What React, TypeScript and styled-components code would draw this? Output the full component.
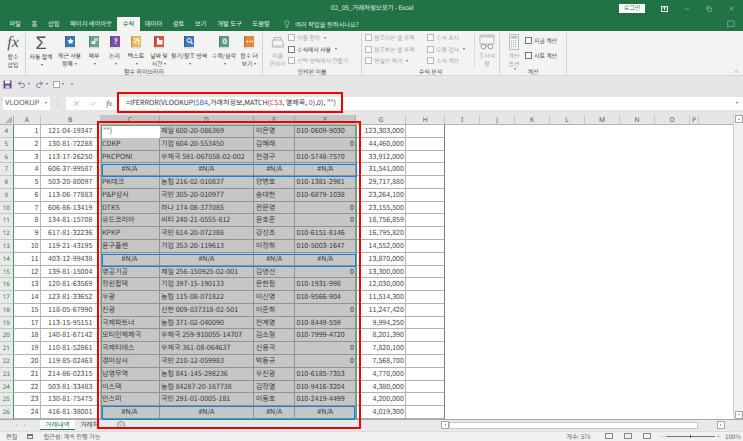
import { styled, createGlobalStyle } from 'styled-components';
import { ReactNode } from 'react';
import {
	Check,
	ChevronUp,
	Copy,
	Lightbulb,
	MessageSquare,
	Minus,
	Plus,
	Redo2,
	Undo2,
	X,
} from 'lucide-react';

const GlobalStyle = createGlobalStyle`
	html, body {
		margin: 0;
		padding: 0;
		background: #fff;
	}
	body {
		font-family: 'Noto Sans CJK KR', 'Noto Sans', sans-serif;
		text-rendering: geometricPrecision;
	}
`;

const Window = styled.div`
	position: relative;
	width: 743px;
	height: 441px;
	overflow: hidden;
	display: flex;
	flex-direction: column;
	background: #fff;
	color: #444;
`;

/* title bar + tabs */
const TitleBar = styled.div`
	height: 17px;
	background: #217346;
	display: flex;
	align-items: center;
	justify-content: flex-end;
	color: #e4efe8;
	font-size: 6.4px;
	position: relative;
`;

const TitleText = styled.div`
	position: absolute;
	left: 331px;
	top: 3px;
	line-height: 10px;
`;

const LoginButton = styled.div`
	width: 26px;
	height: 8.5px;
	background: #fff;
	color: #217346;
	font-size: 6px;
	line-height: 8.5px;
	text-align: center;
	margin-right: 8px;
`;

const WindowButton = styled.div`
	width: 22.5px;
	display: flex;
	justify-content: center;
	color: #e4efe8;
`;

const TabBar = styled.div`
	height: 14px;
	background: #217346;
	display: flex;
	align-items: stretch;
	padding-left: 4px;
	position: relative;
`;

const Tab = styled.div<{ $active?: boolean }>`
	padding: 0 5.3px;
	font-size: 6.3px;
	line-height: 14px;
	background: ${(p) => (p.$active ? '#f3f3f3' : 'transparent')};
	color: ${(p) => (p.$active ? '#217346' : '#e4efe8')};
	font-weight: ${(p) => (p.$active ? 500 : 400)};
`;

const TellMe = styled.div`
	display: flex;
	align-items: center;
	gap: 4px;
	margin-left: 8px;
	font-size: 6.3px;
	color: #dfeae3;
`;

const CommentButton = styled.div`
	position: absolute;
	right: 8px;
	top: 3px;
	color: #e4efe8;
	display: flex;
`;

/* ribbon */
const Ribbon = styled.div`
	height: 45px;
	background: #f3f3f3;
	border-bottom: 1px solid #d6d6d6;
	box-sizing: border-box;
	display: flex;
	position: relative;
`;

const Group = styled.div<{ $w: number }>`
	width: ${(p) => p.$w}px;
	flex: none;
	display: flex;
	flex-direction: column;
	border-right: 1px solid #d4d4d4;
	box-sizing: border-box;
	margin-top: 2px;
`;

const GroupBody = styled.div<{ $pad?: number }>`
	flex: 1;
	display: flex;
	padding-left: ${(p) => p.$pad ?? 0}px;
	min-height: 0;
`;

const GroupLabel = styled.div`
	height: 7px;
	line-height: 7px;
	font-size: 6px;
	text-align: center;
	color: #555;
`;

const Item = styled.div<{ $w: number; $off?: boolean }>`
	width: ${(p) => p.$w}px;
	flex: none;
	display: flex;
	flex-direction: column;
	align-items: center;
	font-size: 5.9px;
	line-height: 8px;
	text-align: center;
	white-space: nowrap;
	color: ${(p) => (p.$off ? '#a9a9a9' : '#444')};
`;

const WatchItem = styled(Item)`
	border-left: 1px solid #dcdcdc;
	box-sizing: border-box;
`;

const ItemIcon = styled.div`
	height: 17px;
	margin-top: 1px;
	display: flex;
	align-items: center;
	justify-content: center;
	margin-bottom: 2px;
`;

const Caret = styled.span`
	display: inline-block;
	width: 0;
	height: 0;
	border-left: 1.5px solid transparent;
	border-right: 1.5px solid transparent;
	border-top: 2px solid #666;
	vertical-align: middle;
	margin-left: 2px;
`;

const CommandList = styled.div<{ $w: number; $gap?: number; $top?: number }>`
	width: ${(p) => p.$w}px;
	flex: none;
	display: flex;
	flex-direction: column;
	gap: ${(p) => p.$gap ?? 2}px;
	padding-top: ${(p) => p.$top ?? 0}px;
`;

const Command = styled.div<{ $off?: boolean }>`
	height: 9.5px;
	display: flex;
	align-items: center;
	gap: 2px;
	font-size: 5.9px;
	white-space: nowrap;
	color: ${(p) => (p.$off ? '#a9a9a9' : '#444')};
`;

const TinyBox = styled.span<{ $c?: string }>`
	width: 7px;
	height: 7px;
	flex: none;
	box-sizing: border-box;
	border: 1px solid ${(p) => p.$c ?? '#b8b8b8'};
	background: #fafafa;
`;

const FxGlyph = styled.div`
	font-family: 'Liberation Serif', serif;
	font-style: italic;
	font-size: 16px;
	line-height: 18px;
	color: #555;
`;

const SigmaGlyph = styled.div`
	font-family: 'Liberation Sans', sans-serif;
	font-size: 18px;
	line-height: 18px;
	color: #555;
`;

const CollapseButton = styled.div`
	position: absolute;
	right: 3px;
	bottom: 0;
	color: #666;
	display: flex;
`;

/* quick access + formula bar */
const QuickBar = styled.div`
	height: 21px;
	background: #e6e6e6;
	display: flex;
	align-items: center;
	gap: 5px;
	padding: 0 0 5px 3px;
	box-sizing: border-box;
`;

const QuickIcon = styled.div<{ $c: string }>`
	color: ${(p) => p.$c};
	display: flex;
	align-items: center;
`;

const SaveIcon = () => (
	<svg width='9' height='9' viewBox='0 0 9 9'>
		<rect x='0.5' y='0.5' width='8' height='8' fill='#6a4a97' />
		<rect x='2' y='0.5' width='5' height='3' fill='#fff' />
		<rect x='2.5' y='5.5' width='4' height='3' fill='#d9d2e6' />
	</svg>
);

const FormulaBar = styled.div`
	height: 12.5px;
	background: #e6e6e6;
	display: flex;
	align-items: stretch;
`;

const NameBox = styled.div`
	width: 47px;
	margin-left: 3px;
	background: #fff;
	font-family: 'Noto Sans', sans-serif;
	font-size: 7.4px;
	line-height: 12.5px;
	padding-left: 2px;
	box-sizing: border-box;
	color: #555;
	position: relative;
`;

const NameCaret = styled(Caret)`
	position: absolute;
	right: 3px;
	top: 5px;
`;

const BarDots = styled.div`
	width: 16px;
	text-align: center;
	font-size: 7px;
	line-height: 12px;
	color: #999;
`;

const BarButtons = styled.div`
	width: 52px;
	background: #fff;
	display: flex;
	align-items: center;
	justify-content: space-around;
	padding: 0 1px 0 2px;
	box-sizing: border-box;
	color: #666;
`;

const BarFx = styled.span`
	font-family: 'Liberation Serif', serif;
	font-style: italic;
	font-size: 8px;
	color: #555;
`;

const FormulaInput = styled.div`
	flex: 1;
	margin-left: 1px;
	padding-left: 7px;
	background: #fff;
	font-size: 7.05px;
	line-height: 12.5px;
	white-space: pre;
	color: #333;
	position: relative;
`;

const FormulaRef = styled.span<{ $c: string }>`
	color: ${(p) => p.$c};
`;

const FormulaCaret = styled(Caret)`
	position: absolute;
	right: 5px;
	top: 5px;
`;

const BarGap = styled.div`
	height: 5.5px;
	background: #e6e6e6;
`;

/* sheet */
const SheetArea = styled.div`
	display: flex;
	height: 304px;
`;

const Sheet = styled.div`
	flex: 1;
	min-width: 0;
	position: relative;
	overflow: hidden;
`;

const COLUMNS = '13.5px 27.5px 59.5px 59px 94.7px 40.8px 61.5px 50px 38.6px 35px 35px 35px 35px 35px 35px 35px 9px';

const HeaderRow = styled.div`
	display: grid;
	grid-template-columns: ${COLUMNS};
	height: 10px;
	background: #e6e6e6;
	border-bottom: 1px solid #b4b4b4;
	box-sizing: border-box;
`;

const CornerCell = styled.div`
	position: relative;
	border-right: 1px solid #b4b4b4;
	&::after {
		content: '';
		position: absolute;
		right: 1px;
		bottom: 1px;
		border-left: 7px solid transparent;
		border-bottom: 7px solid #b5b5b5;
	}
`;

const ColHead = styled.div<{ $selected?: boolean }>`
	font-family: 'Noto Sans', sans-serif;
	font-size: 6.6px;
	line-height: 9px;
	text-align: center;
	color: ${(p) => (p.$selected ? '#3f6a52' : '#555')};
	background: ${(p) => (p.$selected ? '#c6c6c6' : 'transparent')};
	border-right: 1px solid ${(p) => (p.$selected ? '#aaa' : '#c8c8c8')};
	box-sizing: border-box;
`;

const Row = styled.div<{ $h: number }>`
	display: grid;
	grid-template-columns: ${COLUMNS};
	grid-template-rows: ${(p) => p.$h}px;
	height: ${(p) => p.$h}px;
`;

const RowHead = styled.div`
	background: #e9e9e9;
	color: #2f7a50;
	font-family: 'Noto Sans', sans-serif;
	font-size: 6.2px;
	line-height: 12px;
	text-align: center;
	border-right: 1px solid #3f9a68;
	border-bottom: 1px solid #c8c8c8;
	box-sizing: border-box;
`;

const Cell = styled.div<{ $align?: string; $selected?: boolean; $edge?: boolean }>`
	font-size: 7.1px;
	line-height: 12px;
	padding: 0 1.5px;
	box-sizing: border-box;
	white-space: nowrap;
	overflow: hidden;
	text-align: ${(p) => p.$align ?? 'left'};
	color: ${(p) => (p.$selected ? '#3a3a3a' : '#4c4c4c')};
	background: ${(p) => (p.$selected ? '#c6c6c6' : '#fff')};
	border-right: 1px solid ${(p) => (p.$edge ? '#7d7d7d' : p.$selected ? '#929292' : '#b8b8b8')};
	border-bottom: 1px solid ${(p) => (p.$selected ? '#929292' : '#b0b0b0')};
`;

const ActiveCell = styled(Cell)`
	background: #fff;
	border-right-color: #fff;
	border-bottom-color: #fff;
	padding-left: 2.5px;
`;

const SelectionFrame = styled.div`
	position: absolute;
	left: 100.5px;
	top: 10px;
	width: 256.5px;
	height: 294px;
	box-sizing: border-box;
	border: 1px solid #5f9f7c;
	pointer-events: none;
`;

const VScroll = styled.div`
	width: 10px;
	flex: none;
	background: #f0f0f0;
	border-left: 1px solid #d0d0d0;
	box-sizing: border-box;
	display: flex;
	flex-direction: column;
	justify-content: space-between;
	align-items: center;
`;

const ScrollButton = styled.div`
	width: 8px;
	height: 8px;
	background: #fff;
	border: 1px solid #a8a8a8;
	box-sizing: border-box;
	display: flex;
	align-items: center;
	justify-content: center;
	flex: none;
`;

const Arrow = styled.span<{ $dir: 'up' | 'down' | 'left' | 'right' }>`
	width: 0;
	height: 0;
	border-style: solid;
	border-color: transparent;
	border-width: 1.6px;
	${(p) => `border-${{ up: 'bottom', down: 'top', left: 'right', right: 'left' }[p.$dir]}-color: #444;`}
`;

/* sheet tabs */
const SheetTabs = styled.div`
	height: 11.5px;
	background: #e9e9e9;
	border-top: 1px solid #a8a8a8;
	box-sizing: border-box;
	display: flex;
	align-items: stretch;
`;

const TabNav = styled.div`
	width: 40px;
	display: flex;
	justify-content: center;
	align-items: center;
	gap: 7px;
	opacity: 0.45;
`;

const SheetTab = styled.div<{ $active?: boolean; $w: number }>`
	width: ${(p) => p.$w}px;
	height: 10px;
	text-align: center;
	font-size: 6.6px;
	line-height: 9px;
	overflow: hidden;
	box-sizing: border-box;
	background: ${(p) => (p.$active ? '#fff' : 'transparent')};
	color: ${(p) => (p.$active ? '#217346' : '#444')};
	border-bottom: ${(p) => (p.$active ? '1px solid #217346' : 'none')};
`;

const AddSheet = styled.div`
	width: 8px;
	height: 8px;
	margin: 1px 0 0 13px;
	border: 1px solid #888;
	border-radius: 50%;
	box-sizing: border-box;
	color: #777;
	display: flex;
	align-items: center;
	justify-content: center;
`;

const HScroll = styled.div`
	margin-left: auto;
	width: 292px;
	display: flex;
	align-items: center;
	margin-right: 10px;
`;

const HThumb = styled.div`
	width: 249px;
	height: 7px;
	background: #fff;
	border: 1px solid #c8c8c8;
	box-sizing: border-box;
	margin-right: 19px;
`;

/* status bar */
const StatusBar = styled.div`
	flex: 1;
	background: #f0f0f0;
	border-top: 1px solid #dcdcdc;
	box-sizing: border-box;
	display: flex;
	align-items: center;
	padding-left: 6px;
	font-size: 6.2px;
	color: #666;
`;

const StatusIcon = styled.div`
	width: 6px;
	height: 5px;
	border: 1px solid #777;
	border-top-width: 2px;
	box-sizing: border-box;
	margin: 0 10px 0 10px;
`;

const StatusGroup = styled.div`
	margin-left: auto;
	display: flex;
	align-items: center;
	gap: 11px;
	padding-right: 2px;
`;

const CountText = styled.span`
	margin-right: 3px;
`;

const ViewIcon = styled.div`
	width: 8px;
	height: 6px;
	border: 1px solid #888;
	box-sizing: border-box;
`;

const ZoomSlider = styled.div`
	display: flex;
	align-items: center;
	gap: 1px;
	color: #999;
	margin: 0 -7px 0 -2px;
`;

const ZoomTrack = styled.div`
	width: 49px;
	height: 1px;
	background: #777;
	position: relative;
	&::after {
		content: '';
		position: absolute;
		left: 24px;
		top: -1px;
		width: 1px;
		height: 3px;
		background: #555;
	}
`;

/* review marks drawn on top of the screenshot */
const Mark = styled.div<{ $c: string; $x: number; $y: number; $w: number; $h: number }>`
	position: absolute;
	left: ${(p) => p.$x}px;
	top: ${(p) => p.$y}px;
	width: ${(p) => p.$w}px;
	height: ${(p) => p.$h}px;
	border: ${(p) => (p.$c === 'red' ? '2px solid #f00000' : '1.6px solid #0a84e8')};
	box-sizing: border-box;
	pointer-events: none;
`;

const Book = ({ color, children }: { color: string; children: ReactNode }) => (
	<svg width='12' height='14' viewBox='0 0 12 14'>
		<path d='M1 1h10v11H2.5A1.5 1.5 0 0 0 1 13.5z' fill={color} />
		<path d='M1 12.5A1.5 1.5 0 0 1 2.5 12H11v1.5H2.5A1.5 1.5 0 0 1 1 12.5z' fill='#ddd' />
		<rect x='1' y='1' width='1.2' height='11' fill='#00000030' />
		{children}
	</svg>
);

const Glyph = ({ children }: { children: string }) => (
	<text
		x='6.6'
		y='9'
		fontSize='7.5'
		fontWeight='bold'
		textAnchor='middle'
		fill='#fff'
		fontFamily="'Noto Sans CJK KR', sans-serif"
	>
		{children}
	</text>
);

const recentIcon = (
	<Book color='#3f79b5'>
		<path d='M6.6 3l1 2.1 2.2.3-1.6 1.5.4 2.2-2-1-2 1 .4-2.2-1.6-1.5 2.2-.3z' fill='#fff' />
	</Book>
);
const financeIcon = (
	<Book color='#6aa38a'>
		<rect x='3.5' y='6' width='4' height='3' fill='#dcebe4' />
		<rect x='6' y='3' width='4' height='3' fill='#b9d6c9' />
	</Book>
);
const logicIcon = (
	<Book color='#7b4fa6'>
		<Glyph>?</Glyph>
	</Book>
);
const textIcon = (
	<Book color='#e5b95a'>
		<Glyph>가</Glyph>
	</Book>
);
const dateIcon = (
	<Book color='#d9573f'>
		<rect x='4' y='5' width='5.5' height='4.5' fill='#fff' />
		<rect x='4' y='3' width='2' height='2' fill='#fff' />
	</Book>
);
const lookupIcon = (
	<Book color='#3f79b5'>
		<circle cx='6.2' cy='5.4' r='2' fill='none' stroke='#fff' strokeWidth='1' />
		<path d='M7.6 7l2 2' stroke='#fff' strokeWidth='1.2' />
	</Book>
);
const mathIcon = (
	<Book color='#5f9c87'>
		<Glyph>0</Glyph>
	</Book>
);
const moreIcon = (
	<Book color='#e58a3c'>
		<path d='M3.5 6.5h1.4M6 6.5h1.4M8.5 6.5h1.4' stroke='#fff' strokeWidth='1.3' />
	</Book>
);

const nameManagerIcon = (
	<svg width='16' height='14' viewBox='0 0 16 14'>
		<path d='M3 5h9l2 6H2z' fill='#f4f4f4' stroke='#b5b5b5' />
		<path d='M4 5V2.5h7V5' fill='none' stroke='#b5b5b5' />
		<rect x='2' y='11' width='12' height='2' fill='#cfcfcf' />
	</svg>
);

const watchIcon = (
	<svg width='16' height='16' viewBox='0 0 16 16'>
		<rect x='1' y='1' width='14' height='9' fill='#f6f6f6' stroke='#bdbdbd' />
		<rect x='1' y='1' width='14' height='2.5' fill='#c9c9c9' />
		<circle cx='4.5' cy='12.5' r='2.4' fill='none' stroke='#999' />
		<circle cx='11.5' cy='12.5' r='2.4' fill='none' stroke='#999' />
		<path d='M7 12h2' stroke='#999' />
	</svg>
);

const calcIcon = (
	<svg width='10' height='16' viewBox='0 0 10 16'>
		<rect x='0.5' y='0.5' width='9' height='15' fill='#f4f4f4' stroke='#bdbdbd' />
		<rect x='2' y='2' width='6' height='2.5' fill='#bdbdbd' />
		<path d='M2 6.5h6M2 8.5h6M2 10.5h6M2 12.5h6' stroke='#b0b0b0' strokeDasharray='1 1' />
	</svg>
);

type Data = [number, number, string, string?, string?, string?, string?, string?];

const ROWS: Data[] = [
	[4, 1, '121-04-19347', '"")', '제일 600-20-086369', '이은영', '010-0609-9030', '123,303,000'],
	[5, 2, '130-81-72288', 'CDKP', '기업 604-20-553450', '김혜래', '0', '44,460,000'],
	[6, 3, '113-17-26250', 'PKCPONI', '우체국 591-067058-02-002', '전경구', '010-5748-7570', '33,912,000'],
	[7, 4, '606-37-99587', '#N/A', '#N/A', '#N/A', '#N/A', '31,541,000'],
	[8, 5, '503-20-80097', 'PK테크', '농협 216-02-010837', '양병호', '010-1381-2981', '29,717,880'],
	[9, 6, '113-06-77883', 'P&P상사', '국민 305-20-010977', '송대헌', '010-6879-1038', '23,264,100'],
	[10, 7, '606-86-13419', 'DTKS', '하나 174-08-377085', '권문영', '0', '23,155,500'],
	[11, 8, '134-81-15708', '유드코리아', '씨티 240-21-0555-812', '윤호준', '0', '18,756,859'],
	[12, 9, '617-81-32236', 'KPKP', '국민 614-20-072386', '강성조', '010-6151-8146', '16,795,820'],
	[13, 10, '119-21-43195', '윤구플랜', '기업 353-20-119613', '이정희', '010-5003-1647', '14,552,000'],
	[14, 11, '403-12-99438', '#N/A', '#N/A', '#N/A', '#N/A', '13,870,000'],
	[15, 12, '139-81-15004', '영공기공', '제일 256-150925-02-001', '김명선', '0', '13,300,000'],
	[16, 13, '120-81-63569', '정원윌텍', '기업 397-15-190133', '문한필', '010-1931-998', '12,030,000'],
	[17, 14, '123-81-33652', '우광', '농협 115-08-071822', '이신영', '010-9566-904', '11,514,300'],
	[18, 15, '118-05-67990', '진광', '신한 009-037318-02-501', '이준희', '0', '11,247,420'],
	[19, 17, '113-15-95151', '국제파트너', '농협 371-02-040090', '전계영', '010-8449-559', '9,994,250'],
	[20, 18, '140-81-67142', '모티인체제국', '우체국 259-910055-14707', '김소형', '010-7999-4720', '8,201,390'],
	[21, 19, '110-81-52861', '국제티에스', '우체국 361-08-064637', '신용국', '0', '7,820,100'],
	[22, 20, '119-85-02463', '경미상사', '국민 210-12-059983', '박동규', '0', '7,568,700'],
	[23, 21, '214-86-02315', '남영무역', '농협 841-145-298236', '우진광', '010-6185-7353', '4,770,000'],
	[24, 22, '503-81-33483', '이스텍', '농협 84287-20-167738', '김정열', '010-9416-3204', '4,380,000'],
	[25, 23, '130-81-75475', '인스미', '국민 291-01-0005-181', '이동호', '010-2419-4499', '4,200,000'],
	[26, 24, '416-81-38001', '#N/A', '#N/A', '#N/A', '#N/A', '4,019,300'],
];

const TABS = ['파일', '홈', '삽입', '페이지 레이아웃', '수식', '데이터', '검토', '보기', '개발 도구', '도움말'];
const COLS = ['A', 'B', 'C', 'D', 'E', 'F', 'G', 'H', 'I', 'J', 'K', 'L', 'M', 'N', 'O', 'P'];

const LIBRARY = [
	{ w: 26, icon: <SigmaGlyph>Σ</SigmaGlyph>, label: ['자동 합계', <br key='b' />, <Caret key='c' />] },
	{ w: 31, icon: recentIcon, label: ['최근 사용', <br key='b' />, '항목', <Caret key='c' />] },
	{ w: 18, icon: financeIcon, label: ['재무', <br key='b' />, <Caret key='c' />] },
	{ w: 23, icon: logicIcon, label: ['논리', <br key='b' />, <Caret key='c' />] },
	{ w: 20, icon: textIcon, label: ['텍스트', <br key='b' />, <Caret key='c' />] },
	{ w: 26, icon: dateIcon, label: ['날짜 및', <br key='b' />, '시간', <Caret key='c' />] },
	{ w: 34, icon: lookupIcon, label: ['찾기/참조 영역', <br key='b' />, <Caret key='c' />] },
	{ w: 36, icon: mathIcon, label: ['수학/삼각', <br key='b' />, <Caret key='c' />] },
	{ w: 14, icon: moreIcon, label: ['함수 더', <br key='b' />, '보기', <Caret key='c' />] },
];

const rowHeight = (i: number) => Math.round((i + 1) * 12.78) - Math.round(i * 12.78);

const App = () => {
	return (
		<Window>
			<GlobalStyle />
			<TitleBar>
				<TitleText>02_05_거래처정보찾기 - Excel</TitleText>
				<LoginButton>로그인</LoginButton>
				<WindowButton>
					<svg width='7' height='6' viewBox='0 0 7 6'>
						<rect x='0.5' y='0.5' width='6' height='5' fill='none' stroke='currentColor' />
						<path d='M3.5 1v3M2 2.5l1.5-1.5L5 2.5' stroke='currentColor' fill='none' />
					</svg>
				</WindowButton>
				<WindowButton>
					<Minus size={6} strokeWidth={1.5} />
				</WindowButton>
				<WindowButton>
					<Copy size={6} strokeWidth={1.5} />
				</WindowButton>
				<WindowButton>
					<X size={7} strokeWidth={1.5} />
				</WindowButton>
			</TitleBar>
			<TabBar>
				{TABS.map((tab) => (
					<Tab key={tab} $active={tab === '수식'}>
						{tab}
					</Tab>
				))}
				<TellMe>
					<Lightbulb size={8} strokeWidth={1.5} />
					여러 작업을 원하시나요?
				</TellMe>
				<CommentButton>
					<MessageSquare size={8} strokeWidth={1.2} />
				</CommentButton>
			</TabBar>

			<Ribbon>
				<Group $w={26}>
					<GroupBody>
						<Item $w={26}>
							<ItemIcon>
								<FxGlyph>fx</FxGlyph>
							</ItemIcon>
							함수
							<br />
							삽입
						</Item>
					</GroupBody>
				</Group>
				<Group $w={237}>
					<GroupBody $pad={2}>
						{LIBRARY.map((item, i) => (
							<Item key={i} $w={item.w}>
								<ItemIcon>{item.icon}</ItemIcon>
								<span>{item.label}</span>
							</Item>
						))}
					</GroupBody>
					<GroupLabel>함수 라이브러리</GroupLabel>
				</Group>
				<Group $w={99}>
					<GroupBody $pad={4}>
						<Item $w={21} $off>
							<ItemIcon>{nameManagerIcon}</ItemIcon>
							이름
							<br />
							관리자
						</Item>
						<CommandList $w={70}>
							<Command $off>
								<TinyBox />
								이름 정의 <Caret />
							</Command>
							<Command>
								<TinyBox $c='#777' />
								수식에서 사용 <Caret />
							</Command>
							<Command $off>
								<TinyBox />
								선택 영역에서 만들기
							</Command>
						</CommandList>
					</GroupBody>
					<GroupLabel>정의된 이름</GroupLabel>
				</Group>
				<Group $w={138}>
					<GroupBody $pad={3}>
						<CommandList $w={62}>
							<Command $off>
								<TinyBox />
								참조되는 셀 추적
							</Command>
							<Command $off>
								<TinyBox />
								참조하는 셀 추적
							</Command>
							<Command $off>
								<TinyBox />
								연결선 제거 <Caret />
							</Command>
						</CommandList>
						<CommandList $w={47}>
							<Command $off>
								<TinyBox />
								수식 표시
							</Command>
							<Command $off>
								<TinyBox />
								오류 검사 <Caret />
							</Command>
							<Command $off>
								<TinyBox />
								수식 계산
							</Command>
						</CommandList>
						<WatchItem $w={25} $off>
							<ItemIcon>{watchIcon}</ItemIcon>
							조사식
							<br />창
						</WatchItem>
					</GroupBody>
					<GroupLabel>수식 분석</GroupLabel>
				</Group>
				<Group $w={67}>
					<GroupBody $pad={3}>
						<Item $w={22} $off>
							<ItemIcon>{calcIcon}</ItemIcon>
							계산
							<br />
							옵션 <Caret />
						</Item>
						<CommandList $w={40} $gap={5.5} $top={3}>
							<Command>
								<TinyBox $c='#5b7a96' />
								지금 계산
							</Command>
							<Command>
								<TinyBox $c='#5b7a96' />
								시트 계산
							</Command>
						</CommandList>
					</GroupBody>
					<GroupLabel>계산</GroupLabel>
				</Group>
				<CollapseButton>
					<ChevronUp size={7} strokeWidth={1.5} />
				</CollapseButton>
			</Ribbon>

			<QuickBar>
				<SaveIcon />
				<QuickIcon $c='#3f6fa8'>
					<Undo2 size={9} strokeWidth={2} />
					<Caret />
				</QuickIcon>
				<QuickIcon $c='#3f6fa8'>
					<Redo2 size={9} strokeWidth={2} />
					<Caret />
				</QuickIcon>
				<QuickIcon $c='#aaa'>
					<TinyBox $c='#aaa' />
					<Caret />
				</QuickIcon>
				<QuickIcon $c='#777'>
					<Caret />
				</QuickIcon>
			</QuickBar>
			<FormulaBar>
				<NameBox>
					VLOOKUP
					<NameCaret />
				</NameBox>
				<BarDots>⋮</BarDots>
				<BarButtons>
					<X size={7} strokeWidth={1.5} />
					<Check size={7} strokeWidth={1.5} />
					<BarFx>fx</BarFx>
				</BarButtons>
				<FormulaInput>
					=IFERROR(VLOOKUP(<FormulaRef $c='#2a5fc4'>$B4</FormulaRef>,거래처정보,MATCH(
					<FormulaRef $c='#d0343b'>C$3</FormulaRef>, 열제목, <FormulaRef $c='#8a3fb0'>0</FormulaRef>),0), "")
					<FormulaCaret />
				</FormulaInput>
			</FormulaBar>
			<BarGap />

			<SheetArea>
				<Sheet>
					<HeaderRow>
						<CornerCell />
						{COLS.map((col) => (
							<ColHead key={col} $selected={'CDEF'.includes(col)}>
								{col}
							</ColHead>
						))}
					</HeaderRow>
					{ROWS.map(([num, seq, biz, c, d, e, f, g], i) => {
						const isNa = c === '#N/A';
						const align = isNa ? 'center' : 'left';
						return (
							<Row key={num} $h={rowHeight(i)}>
								<RowHead>{num}</RowHead>
								<Cell $align='right'>{seq}</Cell>
								<Cell $align='center'>{biz}</Cell>
								{num === 4 ? (
									<ActiveCell>{c}</ActiveCell>
								) : (
									<Cell $selected $align={align}>
										{c}
									</Cell>
								)}
								<Cell $selected $align={align}>
									{d}
								</Cell>
								<Cell $selected $align={align}>
									{e}
								</Cell>
								<Cell $selected $align={isNa ? 'center' : f === '0' ? 'right' : 'left'}>
									{f}
								</Cell>
								<Cell $align='right'>{g}</Cell>
								<Cell $edge />
							</Row>
						);
					})}
					<SelectionFrame />
				</Sheet>
				<VScroll>
					<ScrollButton>
						<Arrow $dir='up' />
					</ScrollButton>
					<ScrollButton>
						<Arrow $dir='down' />
					</ScrollButton>
				</VScroll>
			</SheetArea>

			<SheetTabs>
				<TabNav>
					<Arrow $dir='left' />
					<Arrow $dir='right' />
				</TabNav>
				<SheetTab $active $w={35}>
					거래내역
				</SheetTab>
				<SheetTab $w={29}>거래처</SheetTab>
				<AddSheet>
					<Plus size={6} strokeWidth={1.5} />
				</AddSheet>
				<HScroll>
					<ScrollButton>
						<Arrow $dir='left' />
					</ScrollButton>
					<HThumb />
					<ScrollButton>
						<Arrow $dir='right' />
					</ScrollButton>
				</HScroll>
			</SheetTabs>
			<StatusBar>
				편집
				<StatusIcon />
				접근성: 계속 진행 가능
				<StatusGroup>
					<CountText>개수: 576</CountText>
					<ViewIcon />
					<ViewIcon />
					<ViewIcon />
					<ZoomSlider>
						<Minus size={5} />
						<ZoomTrack />
						<Plus size={5} />
					</ZoomSlider>
					<span>100%</span>
				</StatusGroup>
			</StatusBar>

			<Mark $c='red' $x={117} $y={92} $w={226} $h={20.5} />
			<Mark $c='red' $x={97} $y={121} $w={264} $h={307.5} />
			<Mark $c='blue' $x={102} $y={164} $w={254.5} $h={13} />
			<Mark $c='blue' $x={102} $y={253.5} $w={254} $h={13} />
			<Mark $c='blue' $x={102} $y={406} $w={252.5} $h={13.5} />
		</Window>
	);
};

export default App;
